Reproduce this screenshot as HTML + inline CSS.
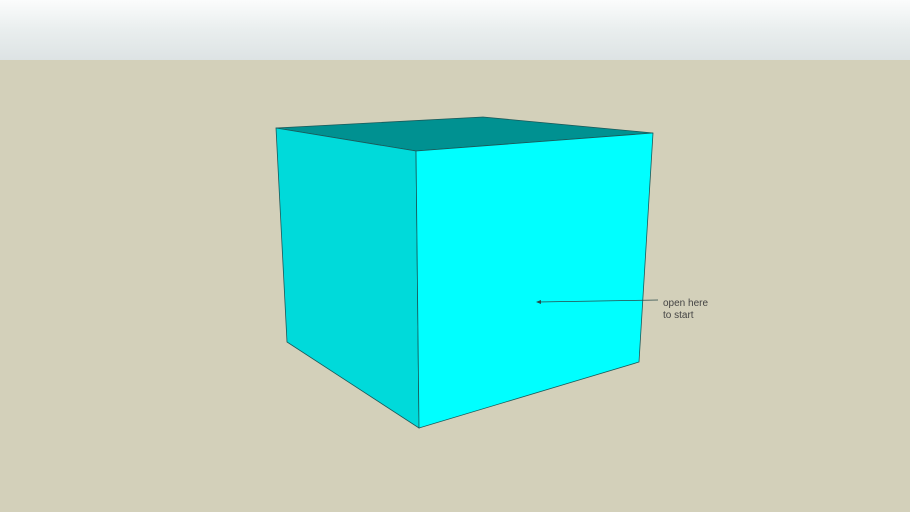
<!DOCTYPE html>
<html><head><style>
body{margin:0;width:910px;height:512px;overflow:hidden;background:#d3d0ba;font-family:"Liberation Sans",sans-serif}
.sky{position:absolute;left:0;top:0;width:910px;height:60px;background:linear-gradient(#fbfcfc,#e9eeee 50%,#dde3e4)}
</style></head><body>
<div class="sky"></div>
<svg width="910" height="512" style="position:absolute;left:0;top:0">
<polygon points="276,128 483,117 653,133 416,151" fill="#009191" stroke="#1a5a5a" stroke-width="0.8"/>
<polygon points="276,128 416,151 419,428 287,342" fill="#00dada" stroke="#1a5a5a" stroke-width="0.8"/>
<polygon points="416,151 653,133 639,362 419,428" fill="#00ffff" stroke="#1a5a5a" stroke-width="0.8"/>
<line x1="538" y1="302" x2="658" y2="300" stroke="#2a4a4a" stroke-width="0.8"/>
<polygon points="536,302 541,300 541,304" fill="#2a4a4a"/>
<text x="663" y="306" font-family="Liberation Sans, sans-serif" font-size="10" fill="#444">open here</text>
<text x="663" y="318" font-family="Liberation Sans, sans-serif" font-size="10" fill="#444">to start</text>
</svg>
</body></html>
